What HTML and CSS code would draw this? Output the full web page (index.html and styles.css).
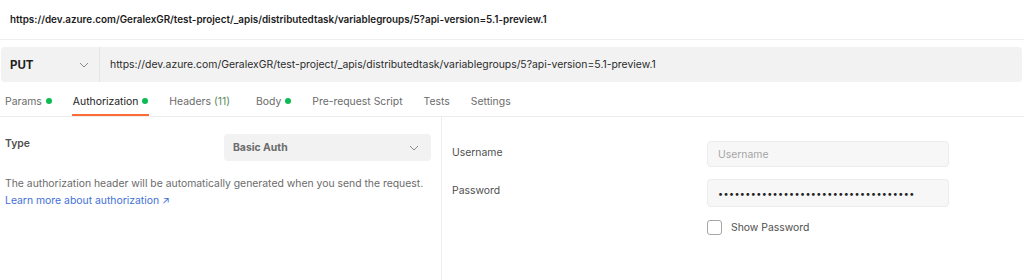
FILE: index.html
```html
<!DOCTYPE html>
<html lang="en">
   <head>
      <meta charset="utf-8">
      <title>PUT variable group</title>
      <link rel="stylesheet" href="styles.css">
   </head>
   <body>
      <div class="title">https://dev.azure.com/GeralexGR/test-project/_apis/distributedtask/variablegroups/5?api-version=5.1-preview.1</div>
      <div class="request">
         <div class="method">PUT
            <svg class="chev" width="10" height="6" viewBox="0 0 10 6"><path d="M1 1l4 4 4-4" fill="none" stroke="#8a8a8a" stroke-width="1"/></svg>
         </div>
         <div class="url">https://dev.azure.com/GeralexGR/test-project/_apis/distributedtask/variablegroups/5?api-version=5.1-preview.1</div>
      </div>
      <nav class="tabs">
         <span class="tab">Params<i class="dot"></i></span>
         <span class="tab active">Authorization<i class="dot"></i></span>
         <span class="tab">Headers <span class="count">(11)</span></span>
         <span class="tab">Body<i class="dot"></i></span>
         <span class="tab">Pre-request Script</span>
         <span class="tab">Tests</span>
         <span class="tab">Settings</span>
      </nav>
      <main class="auth">
         <section class="left">
            <div class="type-row">
               <span class="type-label">Type</span>
               <div class="select">Basic Auth
                  <svg class="chev" width="10" height="6" viewBox="0 0 10 6"><path d="M1 1l4 4 4-4" fill="none" stroke="#8a8a8a" stroke-width="1"/></svg>
               </div>
            </div>
            <p class="hint">The authorization header will be automatically generated when you send the request.<br>
               <a class="learn" href="#">Learn more about authorization <span class="arrow">↗</span></a></p>
         </section>
         <section class="right">
            <label class="field-label">Username</label>
            <div class="input placeholder">Username</div>
            <label class="field-label">Password</label>
            <div class="input dots">••••••••••••••••••••••••••••••••••••</div>
            <div class="check"><span class="box"></span>Show Password</div>
         </section>
      </main>
   </body>
</html>
```
FILE: styles.css
```css
body {
   margin: 0;
   font-family: Inter, "Noto Sans", sans-serif;
   font-size: 10.4px;
   color: #212121;
   background: #fff;
}
.title {
   height: 40px;
   line-height: 38px;
   padding-left: 10px;
   font-weight: 600;
   font-size: 9.9px;
   color: #1c1c1c;
   border-bottom: 1px solid #efefef;
   box-sizing: border-box;
}
.request {
   display: flex;
   height: 35px;
   margin: 7px 2px 0 1px;
   background: #f2f2f2;
   border-radius: 4px;
}
.method {
   width: 99px;
   display: flex;
   align-items: center;
   justify-content: space-between;
   padding: 0 10px 0 9px;
   box-sizing: border-box;
   font-weight: 700;
   font-size: 11.5px;
   color: #212121;
   border-right: 1px solid #e4e4e4;
}
.url {
   display: flex;
   align-items: center;
   padding-left: 10px;
   color: #2b2b2b;
}
.tabs {
   display: flex;
   height: 35px;
   padding-top: 4px;
   box-sizing: border-box;
   border-bottom: 1px solid #ededed;
   padding-left: 5px;
   gap: 21px;
}
.tab {
   display: flex;
   align-items: center;
   color: #6b6b6b;
   position: relative;
}
.tab.active {
   color: #212121;
}
.tab.active::after {
   content: "";
   position: absolute;
   left: -1px;
   right: -1px;
   bottom: 0;
   height: 2px;
   background: #ff6c37;
}
.dot {
   width: 6px;
   height: 6px;
   border-radius: 50%;
   background: #0cbb52;
   margin-left: 4px;
}
.count {
   color: #5b8a5b;
   margin-left: 3px;
   margin-right: 5px;
}
.auth {
   display: grid;
   grid-template-columns: 442px 1fr;
   height: 163px;
}
.left {
   border-right: 1px solid #ededed;
   padding: 17px 10px 0 5px;
}
.type-row {
   display: flex;
   justify-content: space-between;
   align-items: flex-start;
}
.type-label {
   font-weight: 600;
   color: #505050;
   padding-top: 3px;
}
.select {
   width: 207px;
   height: 27px;
   display: flex;
   align-items: center;
   justify-content: space-between;
   padding: 0 12px 0 9px;
   box-sizing: border-box;
   background: #f2f2f2;
   border-radius: 4px;
   font-weight: 700;
   color: #6b6b6b;
}
.hint {
   margin: 15px 0 0;
   line-height: 16px;
   color: #6b6b6b;
}
.learn {
   color: #3f6fd6;
   text-decoration: none;
}
.arrow {
   font-size: 10px;
}
.right {
   display: grid;
   grid-template-columns: 255px 242px;
   grid-auto-rows: min-content;
   row-gap: 12px;
   padding: 24px 0 0 10px;
}
.field-label {
   color: #505050;
   padding-top: 5px;
}
.input {
   height: 24px;
   display: flex;
   align-items: center;
   padding: 0 10px;
   background: #f7f7f7;
   border: 1px solid #ececec;
   border-radius: 4px;
}
.placeholder {
   color: #a6a6a6;
}
.dots {
   color: #212121;
   font-size: 9px;
   letter-spacing: 0.4px;
   height: 26px;
}
.check {
   grid-column: 2;
   display: flex;
   align-items: center;
   color: #505050;
   margin-top: 1px;
}
.box {
   width: 13px;
   height: 13px;
   border: 1px solid #a6a6a6;
   border-radius: 3px;
   margin-right: 9px;
}
```
